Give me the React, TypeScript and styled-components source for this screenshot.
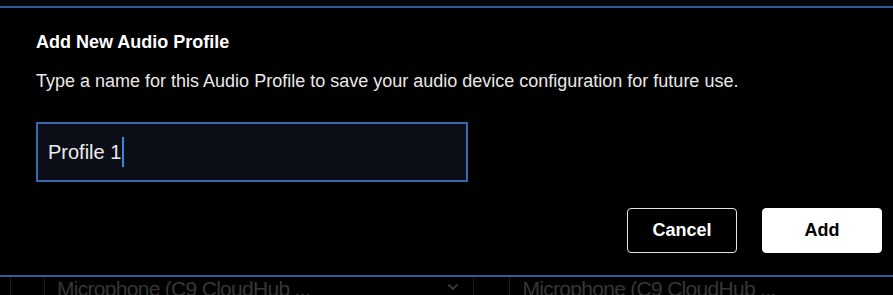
import React from 'react';
import styled, { createGlobalStyle } from 'styled-components';

const GlobalStyle = createGlobalStyle`
  html, body {
    margin: 0;
    padding: 0;
    background: #000;
  }
  body {
    font-family: 'Liberation Sans', Arial, sans-serif;
    overflow: hidden;
  }
`;

const Page = styled.div`
  width: 893px;
  height: 295px;
  display: flex;
  flex-direction: column;
  background: #000;
`;

const TopStrip = styled.div`
  height: 6px;
  background: #06070a;
  border-bottom: 2px solid #2b5c98;
`;

const Dialog = styled.div`
  display: flex;
  flex-direction: column;
  padding: 24px 11px 0 36px;
  height: 269px;
  box-sizing: border-box;
  border-bottom: 2px solid #2b5c98;
`;

const Title = styled.h2`
  margin: 0;
  font-size: 18px;
  line-height: 21px;
  font-weight: 700;
  color: #fff;
`;

const Description = styled.p`
  margin: 18px 0 0;
  font-size: 18px;
  line-height: 21px;
  color: #e8e8e8;
`;

const NameField = styled.div`
  margin-top: 30px;
  width: 432px;
  height: 60px;
  box-sizing: border-box;
  border: 2px solid #3d6aae;
  background: #0b0e16;
  display: flex;
  align-items: center;
  padding-left: 10px;
  font-size: 20px;
  color: #ececec;
`;

const Caret = styled.span`
  display: inline-block;
  width: 2px;
  height: 30px;
  margin-left: 1px;
  background: #3b86dc;
`;

const Actions = styled.div`
  margin-top: 26px;
  display: flex;
  justify-content: flex-end;
  gap: 25px;
`;

const Button = styled.button<{ $primary?: boolean }>`
  height: 45px;
  width: ${(p) => (p.$primary ? '120px' : '110px')};
  box-sizing: border-box;
  border-radius: 4px;
  border: 1.5px solid ${(p) => (p.$primary ? '#fff' : '#e6e6e6')};
  background: ${(p) => (p.$primary ? '#fff' : '#000')};
  color: ${(p) => (p.$primary ? '#000' : '#fff')};
  font-family: 'Liberation Sans', Arial, sans-serif;
  font-size: 18px;
  font-weight: 700;
  cursor: pointer;
`;

const DeviceRow = styled.div`
  flex: 1;
  display: flex;
  align-items: flex-start;
  overflow: hidden;
  background: #000;
`;

const Divider = styled.div<{ $w: number }>`
  width: ${(p) => p.$w}px;
  align-self: stretch;
  border-right: 1px solid #1c1c1c;
`;

const DeviceSelect = styled.div<{ $w: number; $last?: boolean }>`
  width: ${(p) => p.$w}px;
  display: flex;
  align-items: flex-start;
  justify-content: space-between;
  padding: 0 14px 0 12px;
  box-sizing: border-box;
  border-right: ${(p) => (p.$last ? 'none' : '1px solid #1c1c1c')};
  align-self: stretch;
`;

const DeviceName = styled.span`
  font-family: 'Liberation Sans', Arial, sans-serif;
  font-size: 21px;
  letter-spacing: -0.7px;
  line-height: 22px;
  margin-top: 1px;
  color: #363636;
  white-space: nowrap;
`;

const Chevron = styled.svg`
  margin-top: 6px;
  flex-shrink: 0;
`;

export default function App() {
  return (
    <Page>
      <GlobalStyle />
      <TopStrip />
      <Dialog>
        <Title>Add New Audio Profile</Title>
        <Description>
          Type a name for this Audio Profile to save your audio device configuration for future use.
        </Description>
        <NameField>
          Profile 1<Caret />
        </NameField>
        <Actions>
          <Button>Cancel</Button>
          <Button $primary>Add</Button>
        </Actions>
      </Dialog>
      <DeviceRow>
        <Divider $w={10} />
        <Divider $w={33} />
        <DeviceSelect $w={430}>
          <DeviceName>Microphone (C9 CloudHub ...</DeviceName>
          <Chevron width="12" height="8" viewBox="0 0 12 8">
            <path d="M1.5 1.5 L6 6 L10.5 1.5" fill="none" stroke="#3a3a3a" strokeWidth="1.8" />
          </Chevron>
        </DeviceSelect>
        <Divider $w={35} />
        <DeviceSelect $w={383} $last>
          <DeviceName>Microphone (C9 CloudHub ...</DeviceName>
        </DeviceSelect>
      </DeviceRow>
    </Page>
  );
}
